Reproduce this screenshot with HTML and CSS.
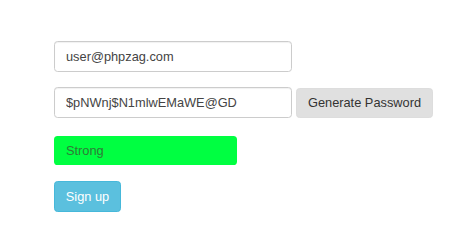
FILE: index.html
```html
<!DOCTYPE html>
<html>
<head>
<meta charset="utf-8">
<link rel="stylesheet" href="styles.css">
</head>
<body>
<form class="form">
  <input class="field" type="text" value="user@phpzag.com">
  <div class="row">
    <input class="field" type="text" value="$pNWnj$N1mlwEMaWE@GD">
    <button type="button" class="btn btn-gen">Generate Password</button>
  </div>
  <div class="strength">Strong</div>
  <button type="button" class="btn btn-info">Sign up</button>
</form>
</body>
</html>
```
FILE: styles.css
```css
html, body {
  margin: 0;
  background: #fff;
}
body {
  font-family: "Liberation Sans", Arial, sans-serif;
  font-size: 12.8px;
}
.form {
  display: flex;
  flex-direction: column;
  align-items: flex-start;
  padding: 41px 0 0 54px;
}
.field {
  box-sizing: border-box;
  width: 238px;
  height: 31px;
  padding: 0 11px;
  border: 1px solid #ccc;
  border-radius: 3.6px;
  font-family: inherit;
  font-size: 12.8px;
  color: #444;
  background: #fff;
  box-shadow: inset 0 1px 1px rgba(0,0,0,.06);
  outline: none;
}
.row {
  display: flex;
  align-items: center;
  gap: 4px;
  margin-top: 15px;
}
.btn {
  box-sizing: border-box;
  font-family: inherit;
  font-size: 12.8px;
  border-radius: 3.6px;
  cursor: pointer;
}
.btn-gen {
  width: 137px;
  height: 30px;
  padding: 0;
  border: 1px solid #ddd;
  background: #e0e0e0;
  color: #333;
}
.strength {
  box-sizing: border-box;
  margin-top: 18px;
  width: 183px;
  height: 29px;
  padding-left: 12px;
  display: flex;
  align-items: center;
  background: #00ff41;
  color: #2f7a37;
  border-radius: 3.6px;
}
.btn-info {
  margin-top: 16px;
  width: 67px;
  height: 31px;
  padding: 0;
  background: #5bc0de;
  border: 1px solid #46b8da;
  color: #fff;
}
```
